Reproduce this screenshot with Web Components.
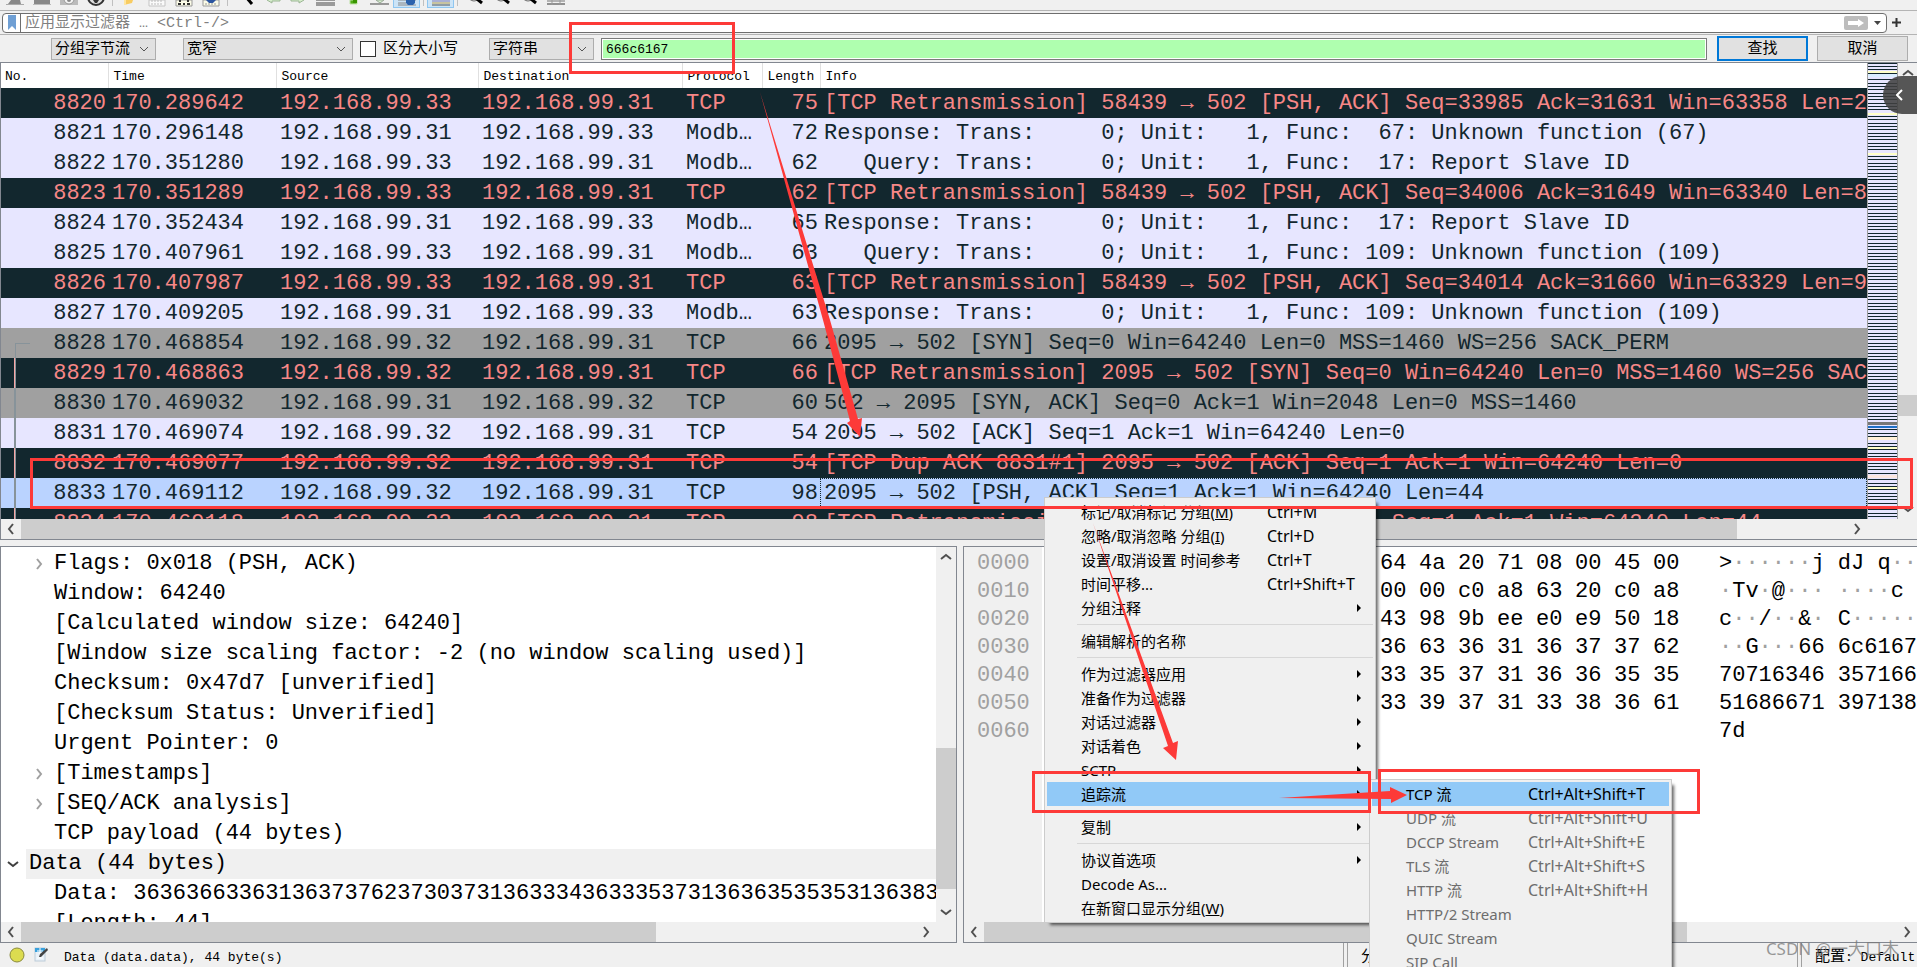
<!DOCTYPE html>
<html lang="zh-CN">
<head>
<meta charset="utf-8">
<title>Wireshark</title>
<style>
  html, body { margin: 0; height: 100%; overflow: hidden; }
  body {
    --chrome: #f0f0f0;
    --line: #828790;
    --thumb: #cdcdcd;
    --mono: "Liberation Mono", "Noto Sans CJK SC", monospace;
    --menu: "Noto Sans", "Noto Sans CJK SC", sans-serif;
    background: #f0f0f0; color: #000;
    font-family: "Liberation Mono", "Noto Sans CJK SC", monospace;
    font-size: 13px;
  }
</style>
</head>
<body>
<ws-app></ws-app>
<script>
const define = (name, html, setup) => {
  const tpl = document.createElement('template');
  tpl.innerHTML = html;
  customElements.define(name, class extends HTMLElement {
    constructor() {
      super();
      this.attachShadow({ mode: 'open' }).append(tpl.content.cloneNode(true));
    }
    connectedCallback() { if (setup) setup(this, this.shadowRoot); }
  });
};

/* ---------- icon toolbar (scrolled so only icon feet show) ---------- */
const icons = [
  '<path d="M7 4l3-4h9l1 4z" fill="#888"/><path d="M5 4h18v1H5z" fill="#aaa"/>',
  '<path d="M6 0h16v4H6z" fill="#888"/><path d="M5 4h18v1H5z" fill="#bbb"/>',
  '<path d="M5 0h18v5H5z" fill="#bbb"/><circle cx="14" cy="-1" r="5" fill="#f4f4f4" stroke="#999"/><circle cx="14" cy="0" r="2" fill="#888"/>',
  '<circle cx="14" cy="-3" r="8" fill="#ddd" stroke="#333" stroke-width="2"/><path d="M11 0h6l-2 3h-2z" fill="#333"/>',
  '|',
  '<path d="M8 0h9l-1 3-8 2z" fill="#f8cc62"/><path d="M8 0h2v5H8z" fill="#ffe6a0"/>',
  '<path d="M6 0h16v6H6z" fill="#fafafa" stroke="#c4c4c4"/><path d="M8 1h12M8 4h12" stroke="#bbb" stroke-dasharray="2 1"/>',
  '<path d="M6 0h16v6H6z" fill="#fbfbe8" stroke="#999"/><path d="M9 0h2v2H9zM17 0h2v2h-2zM8 3h3v2H8zM13 3h2v2h-2zM17 3h3v2h-3z" fill="#333"/>',
  '<path d="M6 0h16v6H6z" fill="#fbfbe8" stroke="#999"/><path d="M9 0h10l-3 3h-4z" fill="#2c559f"/><path d="M8 4h12" stroke="#999" stroke-dasharray="2 1"/>',
  '|',
  '<path d="M15-3l6 7" stroke="#000" stroke-width="3"/>',
  '<path d="M9 0l5-3v2h8v2h-8v2z" fill="#d6edcc" stroke="#9bb694"/>',
  '<path d="M19 0l-5-3v2H6v2h8v2z" fill="#d6edcc" stroke="#9bb694"/>',
  '<path d="M4 0h19M4 3h19M4 5h19" stroke="#444"/>',
  '<path d="M11 0h7v4h-7z" fill="#50ad15" stroke="#bce0a5"/><path d="M14 0h4v3h-4z" fill="#389400"/>',
  '<path d="M4 4h19" stroke="#999" stroke-width="2"/><path d="M10 0h8l-4 3z" fill="#d6edcc" stroke="#9a9"/>',
  '*<path d="M5 0h18M5 3h8M5 5h18" stroke="#888"/><path d="M13 0h9v3l-2 2h-5l-2-2z" fill="#2b62ad"/>',
  '|',
  '*<path d="M5 1h18" stroke="#847ab4"/><path d="M5 3h18" stroke="#c2a24a"/><path d="M5 5h18" stroke="#555"/>',
  '|',
  '<circle cx="13" cy="-5" r="6" fill="none" stroke="#666"/><path d="M16-1l5 4" stroke="#000" stroke-width="3"/>',
  '<circle cx="13" cy="-5" r="6" fill="none" stroke="#666"/><path d="M16-1l5 4" stroke="#000" stroke-width="3"/>',
  '<circle cx="13" cy="-5" r="6" fill="none" stroke="#666"/><path d="M16-1l5 4" stroke="#000" stroke-width="3"/>',
  '<path d="M5 1h18" stroke="#777"/><path d="M5 4h18" stroke="#333"/><path d="M10 0v5M18 0v5" stroke="#999"/>'
];
define('ws-toolbar', `
<style>
  :host { display: flex; height: 10px; padding-left: 1px; border-bottom: 1px solid #b4b4b4; overflow: hidden; }
  button { width: 27px; height: 8px; padding: 0; border: 0; background: none; display: block; }
  button.on { background: #cce4f7; box-shadow: inset 1px 0 #8fc6f0, inset -1px 0 #8fc6f0, inset 0 -1px #8fc6f0; }
  i { width: 7px; height: 6px; background: linear-gradient(#c0c0c0, #c0c0c0) 3px 0 / 1px 6px no-repeat; }
  svg { display: block; }
</style>`, (el, root) => {
  for (const s of icons) {
    if (s === '|') { root.append(document.createElement('i')); continue; }
    const b = document.createElement('button');
    if (s[0] === '*') b.className = 'on';
    b.innerHTML = `<svg width="27" height="8" viewBox="0 0 27 8">${s.replace('*', '')}</svg>`;
    root.append(b);
  }
});

/* ---------- display filter ---------- */
define('ws-filter-bar', `
<style>
  :host { display: flex; align-items: center; gap: 5px; height: 23px; padding: 0 16px 0 2px; border-bottom: 1px solid #b4b4b4; }
  .box { flex: 1; display: flex; align-items: center; height: 18px; background: #fff; border: 1px solid #6e6e6e; border-radius: 4px; }
  input { flex: 1; min-width: 0; height: 18px; box-sizing: border-box; border: 0; border-left: 1px solid #6e6e6e; padding: 1px 4px 0; background: none; outline: 0; font: 15px/17px var(--mono); }
  input::placeholder { color: #808080; opacity: 1; }
  button { padding: 0; border: 0; background: none; display: flex; }
  .mark { width: 17px; justify-content: center; }
  .drop { width: 18px; justify-content: center; }
</style>
<div class="box">
  <button class="mark" aria-label="bookmark"><svg width="8" height="15"><path d="M0 0h8v15l-4-4-4 4z" fill="#6f9fd4"/></svg></button>
  <input aria-label="filter" placeholder="应用显示过滤器 … &lt;Ctrl-/&gt;">
  <button aria-label="apply"><svg width="24" height="14"><rect width="24" height="14" rx="2" fill="#bdbdbd"/><path d="M4 5h10V3l6 4-6 4V9H4z" fill="#fff"/></svg></button>
  <button class="drop" aria-label="history"><svg width="7" height="4"><path d="M0 0h7L3.500 4z" fill="#444"/></svg></button>
</div>
<button aria-label="add"><svg width="9" height="9"><path d="M4.500 0v9M0 4.500h9" stroke="#333" stroke-width="2"/></svg></button>`);

/* ---------- find bar ---------- */
define('ws-find-bar', `
<style>
  :host { display: flex; align-items: center; height: 27px; padding: 0 9px 0 51px; font-size: 15px; }
  select {
    appearance: none; box-sizing: border-box; height: 22px; margin: 0; border: 1px solid #adadad; border-radius: 0; color: #000;
    background: #e1e1e1 url('data:image/svg+xml,<svg xmlns="http://www.w3.org/2000/svg" width="10" height="6"><path d="M1 1l4 4 4-4" fill="none" stroke="%23555"/></svg>') no-repeat right 6px center;
    padding: 2px 3px 0; font: 15px/18px var(--mono); width: 105px;
  }
  .wide { width: 170px; margin: 0 7px 0 27px; }
  .check { appearance: none; width: 16px; height: 16px; margin: 0 7px 0 0; border: 1px solid #333; background: #fff; }
  label { width: 106px; line-height: 22px; padding-top: 2px; }
  .text { flex: 1; min-width: 0; box-sizing: border-box; height: 22px; margin: 0 10px 0 7px; padding: 2px 4px 0; border: 1px solid #7a7a7a; box-shadow: inset 0 0 0 1px #fff; background: #afffaf; font: 13px/18px var(--mono); outline: 0; }
  button { width: 91px; height: 25px; padding: 2px 0 0; border: 1px solid #adadad; background: #e1e1e1; font: 15px/20px var(--mono); color: #000; }
  .go { border: 2px solid #0078d7; margin-right: 9px; }
</style>
<select aria-label="scope"><option>分组字节流</option></select>
<select class="wide" aria-label="width"><option>宽窄</option></select>
<input class="check" type="checkbox" id="cs"><label for="cs">区分大小写</label>
<select aria-label="type"><option>字符串</option></select>
<input class="text" aria-label="search" value="666c6167">
<button class="go">查找</button><button>取消</button>`);

/* ---------- scrollbar ---------- */
define('ws-scroll', `
<style>
  :host { display: flex; align-items: center; background: var(--chrome); height: 20px; }
  :host([vertical]) { flex-direction: column; height: auto; width: 20px; }
  .track { flex: 1; align-self: stretch; position: relative; }
  .thumb { position: absolute; background: var(--thumb); inset: 0; }
  svg { width: 20px; height: 20px; flex: none; fill: none; stroke: #505050; stroke-width: 2; }
  :host([vertical]) svg { transform: rotate(90deg); }
</style>
<svg viewBox="0 0 20 20"><path d="M12 5l-4 5 4 5"/></svg>
<div class="track"><div class="thumb"></div></div>
<svg viewBox="0 0 20 20"><path d="M8 5l4 5-4 5"/></svg>`, (el, root) => {
  const [a, b] = el.getAttribute('span').split(' ');
  const t = root.querySelector('.thumb').style;
  if (el.hasAttribute('vertical')) { t.top = a + '%'; t.bottom = (100 - b) + '%'; }
  else { t.left = a + '%'; t.right = (100 - b) + '%'; }
});

/* ---------- packet list ---------- */
const ip = n => '192.168.99.' + n;
const packets = [
  ['bad', 8820, '170.289642', 33, 31, 'TCP', 75, '[TCP Retransmission] 58439 → 502 [PSH, ACK] Seq=33985 Ack=31631 Win=63358 Len=21'],
  ['tcp', 8821, '170.296148', 31, 33, 'Modb…', 72, 'Response: Trans:     0; Unit:   1, Func:  67: Unknown function (67)'],
  ['tcp', 8822, '170.351280', 33, 31, 'Modb…', 62, '   Query: Trans:     0; Unit:   1, Func:  17: Report Slave ID'],
  ['bad', 8823, '170.351289', 33, 31, 'TCP', 62, '[TCP Retransmission] 58439 → 502 [PSH, ACK] Seq=34006 Ack=31649 Win=63340 Len=8'],
  ['tcp', 8824, '170.352434', 31, 33, 'Modb…', 65, 'Response: Trans:     0; Unit:   1, Func:  17: Report Slave ID'],
  ['tcp', 8825, '170.407961', 33, 31, 'Modb…', 63, '   Query: Trans:     0; Unit:   1, Func: 109: Unknown function (109)'],
  ['bad', 8826, '170.407987', 33, 31, 'TCP', 63, '[TCP Retransmission] 58439 → 502 [PSH, ACK] Seq=34014 Ack=31660 Win=63329 Len=9'],
  ['tcp', 8827, '170.409205', 31, 33, 'Modb…', 63, 'Response: Trans:     0; Unit:   1, Func: 109: Unknown function (109)'],
  ['syn start', 8828, '170.468854', 32, 31, 'TCP', 66, '2095 → 502 [SYN] Seq=0 Win=64240 Len=0 MSS=1460 WS=256 SACK_PERM'],
  ['bad mid', 8829, '170.468863', 32, 31, 'TCP', 66, '[TCP Retransmission] 2095 → 502 [SYN] Seq=0 Win=64240 Len=0 MSS=1460 WS=256 SACK_PERM'],
  ['syn mid', 8830, '170.469032', 31, 32, 'TCP', 60, '502 → 2095 [SYN, ACK] Seq=0 Ack=1 Win=2048 Len=0 MSS=1460'],
  ['tcp mid', 8831, '170.469074', 32, 31, 'TCP', 54, '2095 → 502 [ACK] Seq=1 Ack=1 Win=64240 Len=0'],
  ['bad mid', 8832, '170.469077', 32, 31, 'TCP', 54, '[TCP Dup ACK 8831#1] 2095 → 502 [ACK] Seq=1 Ack=1 Win=64240 Len=0'],
  ['sel mid', 8833, '170.469112', 32, 31, 'TCP', 98, '2095 → 502 [PSH, ACK] Seq=1 Ack=1 Win=64240 Len=44'],
  ['bad mid', 8834, '170.469118', 32, 31, 'TCP', 98, '[TCP Retransmission] 2095 → 502 [PSH, ACK] Seq=1 Ack=1 Win=64240 Len=44']
];
define('ws-packet-list', `
<style>
  :host { display: grid; grid-template: minmax(0, 1fr) 20px / minmax(0, 1fr) 31px 19px; border: solid var(--line); border-width: 1px 0 1px 1px; background: #fff; min-height: 0; box-sizing: border-box; }
  .view { overflow: hidden; }
  table { table-layout: fixed; width: 100%; border-collapse: collapse; }
  th { height: 23px; padding: 2px 0 0 5px; font-weight: 400; font-size: 13px; text-align: left; border-left: 1px solid #e0e0e0; white-space: nowrap; }
  th:first-child { border: 0; padding-left: 4px; }
  td { height: 28px; padding: 2px 0 0 4px; font-size: 22px; line-height: 28px; white-space: pre; overflow: hidden; position: relative; }
  .r { text-align: right; padding: 2px 2px 0 0; }
  .bad { background: #12272e; color: #f78787; }
  .tcp { background: #e7e6ff; color: #12272e; }
  .syn { background: #a0a0a0; color: #12272e; }
  .sel { background: #bad3ff; color: #12272e; }
  .sel td:last-child { outline: 1px dotted #12272e; outline-offset: -1px; }
  .start td:first-child::before { content: ""; position: absolute; left: 14px; top: 15px; width: 14px; height: 15px; border: solid #87939a; border-width: 1px 0 0 1px; }
  .mid td:first-child::before { content: ""; position: absolute; left: 13px; top: 0; width: 1px; height: 30px; background: #87939a; border-right: 1px solid #87939a; }
  .bad.mid td:first-child::before { background: #f7a5a5; }
  .map { border: solid #a0a0a0; border-width: 0 1px;
    background:
      linear-gradient(#ffffc8, #ffffc8) 0 8px / 100% 2px no-repeat,
      linear-gradient(#daeeff, #daeeff) 0 11px / 100% 3px no-repeat,
      linear-gradient(#ffffc8, #ffffc8) 0 50px / 100% 2px no-repeat,
      linear-gradient(#ffffc8, #ffffc8) 0 90px / 100% 2px no-repeat,
      linear-gradient(#777, #777) 0 359px / 100% 3px no-repeat,
      linear-gradient(#1f70c8, #1f70c8) 0 363px / 100% 2px no-repeat,
      linear-gradient(#fff0d8, #fff0d8) 0 374px / 100% 3px no-repeat,
      linear-gradient(#ffffc8, #ffffc8) 0 384px / 100% 2px no-repeat,
      linear-gradient(#fbe6e0, #fbe6e0) 0 412px / 100% 3px no-repeat,
      linear-gradient(#ffffc8, #ffffc8) 0 424px / 100% 2px no-repeat,
      repeating-linear-gradient(#12272e 0 1px, #e7e6ff 1px 3px, #12272e 3px 4px, #e7e6ff 4px 6px, #12272e 6px 7px, #e7e6ff 7px 10px); }
  .h { grid-column: 1; } .corner { grid-column: 2 / 4; background: var(--chrome); }
  .v { width: 19px; }
</style>
<div class="view"><table>
  <colgroup><col style="width:107px"><col style="width:168px"><col style="width:202px"><col style="width:204px"><col style="width:80px"><col style="width:58px"><col></colgroup>
  <thead><tr><th>No.</th><th>Time</th><th>Source</th><th>Destination</th><th>Protocol</th><th>Length</th><th>Info</th></tr></thead>
  <tbody></tbody>
</table></div>
<div class="map"></div>
<ws-scroll class="v" vertical span="75 80"></ws-scroll>
<ws-scroll class="h" span="0 94"></ws-scroll><div class="corner"></div>`, (el, root) => {
  const body = root.querySelector('tbody');
  for (const [cls, no, time, s, d, proto, len, info] of packets) {
    const tr = body.insertRow();
    tr.className = cls;
    [no, time, ip(s), ip(d), proto, len, info].forEach((v, i) => {
      const td = tr.insertCell();
      td.textContent = v;
      if (i === 0 || i === 5) td.className = 'r';
    });
  }
});

/* ---------- detail tree ---------- */
define('ws-tree-row', `
<style>
  :host { display: flex; align-items: center; height: 30px; font-size: 22px; line-height: 30px; white-space: pre; padding-left: 25px; }
  :host([root]) { padding-left: 0; }
  span { flex: 1; padding-left: 3px; }
  :host([root]) span { background: #f0f0f0; }
  svg { width: 25px; height: 20px; flex: none; fill: none; stroke: none; stroke-width: 2; }
  :host([closed]) svg { stroke: #a0a0a0; }
  :host([root]) svg { stroke: #404040; }
</style>
<svg viewBox="0 0 25 20"><path d="M11 5l4 5-4 5"/></svg><span><slot></slot></span>`, (el, root) => {
  if (el.hasAttribute('root')) root.querySelector('path').setAttribute('d', 'M7 8l5 4 5-4');
});
define('ws-details', `
<style>
  :host { display: grid; grid-template: minmax(0, 1fr) 20px / minmax(0, 1fr) 20px; border: 1px solid var(--line); background: #fff; min-height: 0; min-width: 0; box-sizing: border-box; }
  .view { overflow: hidden; padding-top: 2px; }
  .corner { background: var(--chrome); }
</style>
<div class="view">
  <ws-tree-row closed>Flags: 0x018 (PSH, ACK)</ws-tree-row>
  <ws-tree-row>Window: 64240</ws-tree-row>
  <ws-tree-row>[Calculated window size: 64240]</ws-tree-row>
  <ws-tree-row>[Window size scaling factor: -2 (no window scaling used)]</ws-tree-row>
  <ws-tree-row>Checksum: 0x47d7 [unverified]</ws-tree-row>
  <ws-tree-row>[Checksum Status: Unverified]</ws-tree-row>
  <ws-tree-row>Urgent Pointer: 0</ws-tree-row>
  <ws-tree-row closed>[Timestamps]</ws-tree-row>
  <ws-tree-row closed>[SEQ/ACK analysis]</ws-tree-row>
  <ws-tree-row>TCP payload (44 bytes)</ws-tree-row>
  <ws-tree-row root>Data (44 bytes)</ws-tree-row>
  <ws-tree-row>Data: 36363663363136373762373037313633343633353731363635353531363836</ws-tree-row>
  <ws-tree-row>[Length: 44]</ws-tree-row>
</div>
<ws-scroll vertical span="54 96"></ws-scroll>
<ws-scroll span="0 71"></ws-scroll><div class="corner"></div>`);

/* ---------- byte view ---------- */
const dump = [
  ['0000', '64 4a 20 71 08 00 45 00', '>······j dJ q··E·'],
  ['0010', '00 00 c0 a8 63 20 c0 a8', '·Tv·@··· ····c ··'],
  ['0020', '43 98 9b ee e0 e9 50 18', 'c··/··&· C·····P·'],
  ['0030', '36 63 36 31 36 37 37 62', '··G···66 6c61677b'],
  ['0040', '33 35 37 31 36 36 35 35', '70716346 35716655'],
  ['0050', '33 39 37 31 33 38 36 61', '51686671 3971386a'],
  ['0060', '', '7d']
];
define('ws-bytes', `
<style>
  :host { display: grid; grid-template: minmax(0, 1fr) 20px / minmax(0, 1fr); border: solid var(--line); border-width: 1px 0 1px 1px; background: #fff; min-height: 0; min-width: 0; box-sizing: border-box; }
  .view { overflow: hidden; background: linear-gradient(var(--chrome), var(--chrome)) 0 0 / 78px 100% no-repeat; padding-top: 3px; }
  .row { display: grid; grid-template-columns: 78px 338px 339px auto; height: 28px; font-size: 22px; line-height: 28px; white-space: pre; }
  .off { color: #a0a0a0; padding-left: 13px; }
  .hex { grid-column: 3; display: grid; grid-template-columns: repeat(8, 39px); }
  .asc { grid-column: 4; }
  .asc i { color: #a0a0a0; font-style: normal; }
</style>
<div class="view"></div><ws-scroll span="0 77"></ws-scroll>`, (el, root) => {
  root.querySelector('.view').innerHTML = dump.map(([o, h, a]) => `<div class="row"><span class="off">${o}</span><span class="hex">${
    h ? h.split(' ').map(b => `<span>${b}</span>`).join('') : ''}</span><span class="asc">${
    a.replace(/&/g, '&amp;').replace(/>/g, '&gt;').replace(/·+/g, m => `<i>${m}</i>`)}</span></div>`).join('');
});

/* ---------- status bar ---------- */
define('ws-status', `
<style>
  :host { display: flex; align-items: center; height: 24px; padding-left: 9px; font-size: 13px; white-space: nowrap; overflow: hidden; }
  svg { flex: none; margin-right: 9px; }
  .msg { flex: 1; padding: 5px 0 0 6px; }
  .sec { box-sizing: border-box; border-left: 1px solid #a0a0a0; box-shadow: inset 3px 0 var(--chrome), inset 4px 0 #a0a0a0; padding: 5px 0 0 17px; line-height: 19px; height: 24px; }
  .pk { width: 454px; } .pf { width: 120px; }
  .cn { font-size: 15px; }
</style>
<svg width="16" height="16"><ellipse cx="8" cy="8" rx="7" ry="7" fill="#dcdc50" stroke="#8a8a3c"/></svg>
<svg width="15" height="16"><rect x="1" y="1" width="10" height="13" fill="#e9f1f8" stroke="#bccbd8"/><path d="M1 1h10v4H1z" fill="#39a0dc"/><path d="M3 11h6M6 1v6M3 4h6" stroke="#fff"/><path d="M5 10l1-3 7-6 1 2-7 7z" fill="#444"/></svg>
<span class="msg">Data (data.data), 44 byte(s)</span>
<span class="sec pk cn">分组</span>
<span class="sec pf"><span class="cn">配置</span>: Default</span>`);

/* ---------- menus ---------- */
define('ws-menu-item', `
<style>
  :host { display: block; }
  button { display: flex; align-items: center; width: 100%; height: 24px; padding: 0 12px 0 34px; border: 0; background: none; color: inherit; font: 15px/24px var(--menu); text-align: left; white-space: nowrap; }
  :host([active]) button { background: #91c9f7; }
  :host([off]) { color: #6d6d6d; }
  .label { flex: 1; }
  .key { width: var(--key); font-size: 16px; }
  .arrow { display: none; width: 4px; height: 8px; }
  :host([sub]) .arrow { display: block; } :host([sub]) .key { display: none; }
</style>
<button role="menuitem"><span class="label"><slot></slot></span><span class="key"></span><svg class="arrow" viewBox="0 0 4 8"><path d="M0 0l4 4-4 4z"/></svg></button>`,
(el, root) => { root.querySelector('.key').textContent = el.getAttribute('key') || ''; });
define('ws-menu-line', `
<style>:host { display: block; height: 1px; margin: 4px 0 4px 30px; background: #d7d7d7; }</style>`);
define('ws-menu', `
<style>
  :host { display: block; box-sizing: border-box; padding: 2px; background: #f0f0f0; border: 1px solid #ccc; box-shadow: 4px 4px 3px -2px rgba(0,0,0,.6); }
</style><slot></slot>`);

/* ---------- red pen marks ---------- */
define('ws-marks', `
<style>
  :host { display: block; position: absolute; left: 0; top: 0; pointer-events: none; }
  svg { display: block; }
</style>
<svg width="1917" height="967" viewBox="0 0 1917 967" fill="none" stroke="#fd3a38" stroke-width="3">
  <rect x="570.500" y="23.500" width="163" height="49"/>
  <rect x="31.500" y="459.500" width="1880" height="48"/>
  <rect x="1033.500" y="772.500" width="336" height="39"/>
  <rect x="1379.500" y="770.500" width="319" height="42"/>
  <g fill="#fd3a38" stroke="none">
    <path d="M760 92L830 320 858 419 862 418 860 437 847 423 850 421 823 320z"/>
    <path d="M1093 523L1173 743 1178 741 1176 760 1163 748 1168 746z"/>
    <path d="M1279 798L1390 791V787L1407 795 1391 803V799z"/>
  </g>
</svg>`);

define('ws-drawer-tab', `
<style>
  :host { display: block; position: absolute; right: 0; top: 76px; }
  button { display: flex; align-items: center; padding: 0 0 0 13px; width: 34px; height: 38px; border: 0; border-radius: 19px 0 0 19px; background: rgba(64,64,64,.88); }
</style>
<button aria-label="open"><svg width="7" height="12"><path d="M6 1L1 6l5 5" fill="none" stroke="#fff" stroke-width="2"/></svg></button>`);

/* ---------- window ---------- */
define('ws-app', `
<style>
  :host { display: grid; grid-template-rows: auto auto auto minmax(0, 478fr) minmax(0, 403fr) 24px; height: 100vh; position: relative; overflow: hidden; }
  .panes { display: grid; grid-template-columns: minmax(0, 957fr) minmax(0, 954fr); gap: 6px; padding-top: 6px; min-height: 0; }
  .ctx { position: absolute; left: 1044px; top: 497px; width: 332px; --key: 94px; }
  .follow { position: absolute; left: 1369px; top: 779px; width: 303px; --key: 129px; }
  .wm { position: absolute; right: 18px; bottom: 6px; font: 17px/24px var(--menu); color: rgba(120,120,120,.75); }
</style>
<ws-toolbar></ws-toolbar>
<ws-filter-bar></ws-filter-bar>
<ws-find-bar></ws-find-bar>
<ws-packet-list></ws-packet-list>
<div class="panes"><ws-details></ws-details><ws-bytes></ws-bytes></div>
<ws-status></ws-status>
<ws-menu class="ctx">
  <ws-menu-item key="Ctrl+M">标记/取消标记 分组(<u>M</u>)</ws-menu-item>
  <ws-menu-item key="Ctrl+D">忽略/取消忽略 分组(<u>I</u>)</ws-menu-item>
  <ws-menu-item key="Ctrl+T">设置/取消设置 时间参考</ws-menu-item>
  <ws-menu-item key="Ctrl+Shift+T">时间平移...</ws-menu-item>
  <ws-menu-item sub>分组注释</ws-menu-item>
  <ws-menu-line></ws-menu-line>
  <ws-menu-item>编辑解析的名称</ws-menu-item>
  <ws-menu-line></ws-menu-line>
  <ws-menu-item sub>作为过滤器应用</ws-menu-item>
  <ws-menu-item sub>准备作为过滤器</ws-menu-item>
  <ws-menu-item sub>对话过滤器</ws-menu-item>
  <ws-menu-item sub>对话着色</ws-menu-item>
  <ws-menu-item sub>SCTP</ws-menu-item>
  <ws-menu-item sub active>追踪流</ws-menu-item>
  <ws-menu-line></ws-menu-line>
  <ws-menu-item sub>复制</ws-menu-item>
  <ws-menu-line></ws-menu-line>
  <ws-menu-item sub>协议首选项</ws-menu-item>
  <ws-menu-item>Decode As...</ws-menu-item>
  <ws-menu-item>在新窗口显示分组(<u>W</u>)</ws-menu-item>
</ws-menu>
<ws-menu class="follow">
  <ws-menu-item active key="Ctrl+Alt+Shift+T">TCP 流</ws-menu-item>
  <ws-menu-item off key="Ctrl+Alt+Shift+U">UDP 流</ws-menu-item>
  <ws-menu-item off key="Ctrl+Alt+Shift+E">DCCP Stream</ws-menu-item>
  <ws-menu-item off key="Ctrl+Alt+Shift+S">TLS 流</ws-menu-item>
  <ws-menu-item off key="Ctrl+Alt+Shift+H">HTTP 流</ws-menu-item>
  <ws-menu-item off>HTTP/2 Stream</ws-menu-item>
  <ws-menu-item off>QUIC Stream</ws-menu-item>
  <ws-menu-item off>SIP Call</ws-menu-item>
</ws-menu>
<ws-marks></ws-marks>
<ws-drawer-tab></ws-drawer-tab>
<span class="wm">CSDN @一大口木</span>`);
</script>
</body>
</html>
